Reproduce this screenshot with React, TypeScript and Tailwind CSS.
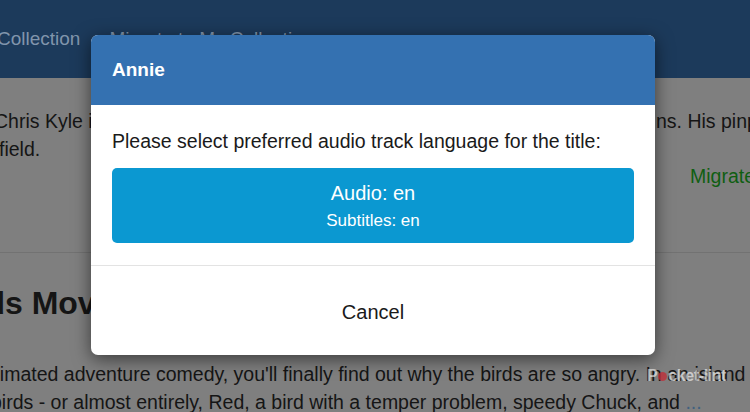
import React from "react";

export default function App() {
  const font = { fontFamily: '"Liberation Sans", Arial, Helvetica, sans-serif' };
  return (
    <div className="relative w-[750px] h-[412px] overflow-hidden bg-[#7f7f7f]" style={font}>
      {/* Top nav bar */}
      <div className="h-[78px] bg-[#1c3a5b] flex items-center whitespace-nowrap text-[19px] text-[#8195ac]">
        <span className="-ml-[3px]">Collection</span>
        <span className="ml-[29px]">Migrate to My Collection</span>
      </div>

      {/* Page content */}
      <div className="flex flex-col whitespace-nowrap text-[19.5px] text-[#151515]">
        <div className="flex mt-[31px] leading-[24px]">
          <span className="-ml-[6px] w-[662px] shrink-0">Chris Kyle is the most lethal sniper in U.S. history</span>
          <span>ns. His pinpoint accuracy</span>
        </div>
        <div className="flex leading-[24px] mt-[4px]">
          <span className="-ml-[1px]">field.</span>
        </div>
        <div className="flex leading-[24px] mt-[3px] text-[#0f5e12]">
          <span className="ml-[690px]">Migrate to My Collection</span>
        </div>
        <div className="mt-[64px] h-px bg-[#727272]" />
        <div className="mt-[33px] leading-[34px] text-[32px] font-bold -ml-[225px]">The Angry Birds Movie</div>
        <div className="mt-[40px] leading-[28px] -ml-[24px]">
          Animated adventure comedy, you'll finally find out why the birds are so angry. In an island
        </div>
        <div className="leading-[28px] -ml-[9px]">
          birds - or almost entirely, Red, a bird with a temper problem, speedy Chuck, and{" "}
          <span className="text-[#40617f]">...</span>
        </div>
      </div>

      {/* Watermark */}
      <div className="absolute left-[647px] top-[364px] text-[16px] font-bold text-white/60 tracking-tight flex items-center">
        <span>P</span>
        <span className="inline-block w-[9px] h-[9px] rounded-full bg-[#c0303a]/80 mx-[1px]" />
        <span>cket-lint</span>
      </div>

      {/* Modal */}
      <div className="absolute left-[91px] top-[35px] w-[564px] h-[320px] bg-white rounded-[7px] shadow-[0_4px_18px_rgba(0,0,0,0.55)] flex flex-col overflow-hidden">
        <div className="h-[70px] bg-[#3471b1] flex items-center px-[21px] shrink-0">
          <span className="text-white font-bold text-[19px]">Annie</span>
        </div>
        <div className="flex flex-col px-[21px] pt-[25px] pb-[22px] border-b border-[#e3e3e3]">
          <div className="text-[19.5px] leading-[22px] text-[#1a1a1a]">
            Please select preferred audio track language for the title:
          </div>
          <div className="mt-[16px] h-[75px] bg-[#0b98d1] rounded-[5px] flex flex-col items-center justify-center text-white">
            <span className="text-[20px] leading-[24px]">Audio: en</span>
            <span className="text-[17px] leading-[20px] mt-[6px]">Subtitles: en</span>
          </div>
        </div>
        <div className="flex-1 flex items-center justify-center text-[20px] text-[#1a1a1a] pt-[2px]">
          Cancel
        </div>
      </div>
    </div>
  );
}
